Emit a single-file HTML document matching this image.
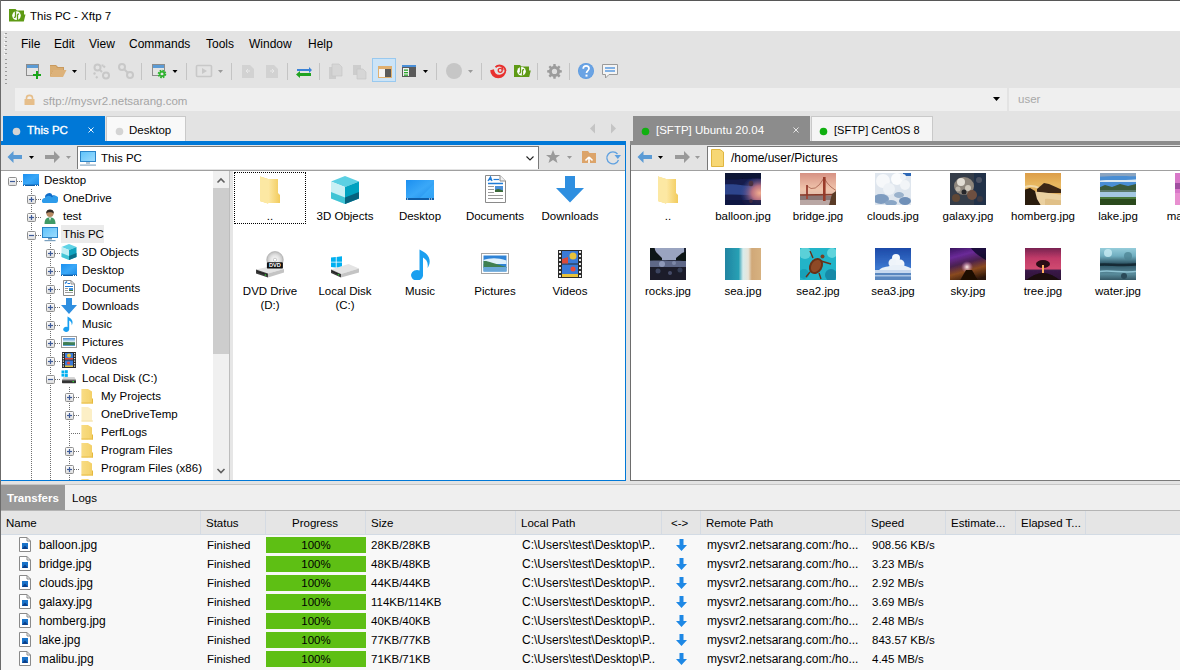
<!DOCTYPE html>
<html><head><meta charset="utf-8">
<style>
*{margin:0;padding:0;box-sizing:border-box}
html,body{width:1180px;height:670px;overflow:hidden}
body{position:relative;background:#e3e3e3;font-family:"Liberation Sans",sans-serif;font-size:11.5px;color:#000}
.a{position:absolute}
.t{position:absolute;white-space:nowrap;line-height:14px}
svg{position:absolute;overflow:visible}
</style></head><body>
<svg width="0" height="0" style="position:absolute;left:0;top:0">
<defs>
<linearGradient id="expg" x1="0" y1="0" x2="0" y2="1"><stop offset="0" stop-color="#fdfdfd"/><stop offset="1" stop-color="#dedede"/></linearGradient>
<linearGradient id="deskg" x1="0" y1="0" x2="1" y2="1"><stop offset="0" stop-color="#1b8ff0"/><stop offset="0.5" stop-color="#3aa8f8"/><stop offset="1" stop-color="#1a8ae8"/></linearGradient>
<linearGradient id="scrg" x1="0" y1="0" x2="1" y2="1"><stop offset="0" stop-color="#5cc2fb"/><stop offset="1" stop-color="#9fdcfd"/></linearGradient>
<linearGradient id="foldg" x1="0" y1="0" x2="1" y2="0"><stop offset="0" stop-color="#fbe39a"/><stop offset="1" stop-color="#f3cf64"/></linearGradient>
<linearGradient id="landg" x1="0" y1="0" x2="0" y2="1"><stop offset="0" stop-color="#4b8fd8"/><stop offset="0.45" stop-color="#d6eaf5"/><stop offset="0.6" stop-color="#3c7f4a"/><stop offset="1" stop-color="#4a90c4"/></linearGradient>
<symbol id="i-desk" viewBox="0 0 16 16"><rect x="0" y="2" width="16" height="12" fill="url(#deskg)"/><rect x="0" y="12.6" width="16" height="1.4" fill="#0f5ea8"/><rect x="1" y="13" width="1" height="1" fill="#fff"/><rect x="12" y="13" width="1" height="1" fill="#fff"/><rect x="14" y="13" width="1" height="1" fill="#fff"/></symbol>
<symbol id="i-cloud" viewBox="0 0 16 16"><path d="M3.5 8.5 A3.8 3.8 0 0 1 10.5 5.5 A3 3 0 0 1 14.5 8 L3.5 8.5Z" fill="#0f6cc8"/><path d="M1 13 A2.8 2.8 0 0 1 3 8 A4 4 0 0 1 10 7.5 A2.8 2.8 0 0 1 16 11 A2.2 2.2 0 0 1 14 13Z" fill="#2d9bea"/></symbol>
<symbol id="i-user" viewBox="0 0 16 16"><path d="M2.5 16 C2.5 10.5 5 9.5 8 9.5 C11 9.5 13.5 10.5 13.5 16Z" fill="#3f9a66"/><path d="M7 10 L8 13 L9 10Z" fill="#f0f0f0"/><circle cx="8" cy="5.3" r="3.6" fill="#b88a63"/><path d="M4.3 5 A3.8 3.8 0 0 1 11.7 5 L11 4 C9 3 7 3 5 4Z" fill="#2f2a26"/><path d="M4.2 5.4 A3.8 3.8 0 0 1 11.8 5.4 C10 3.8 6 3.8 4.2 5.4Z" fill="#2f2a26"/></symbol>
<symbol id="i-pc" viewBox="0 0 16 16"><rect x="0.5" y="1.5" width="15" height="10" fill="url(#scrg)" stroke="#2a84c8"/><rect x="6" y="12" width="4" height="1.5" fill="#6f8ea8"/><rect x="2.5" y="14" width="11" height="1.2" fill="#7aa0bf"/></symbol>
<symbol id="i-cube" viewBox="0 0 16 16"><path d="M8 0 L15.5 3 L8 6 L0.5 3Z" fill="#5fd3e6"/><path d="M0.5 3 L8 6 V16 L0.5 13Z" fill="#bfeef4"/><path d="M15.5 3 L8 6 V16 L15.5 13Z" fill="#0fa3bf"/><path d="M0.5 9 L8 12 V16 L0.5 13Z" fill="#43c5d6"/><path d="M15.5 9 L8 12 V16 L15.5 13Z" fill="#0a6f8a"/></symbol>
<symbol id="i-doc" viewBox="0 0 16 16"><path d="M2.5 0.5 H10 L13.5 4 V15.5 H2.5Z" fill="#fff" stroke="#8a8a8a"/><path d="M10 0.5 V4 H13.5" fill="none" stroke="#8a8a8a"/><path d="M4 6.5H12" stroke="#1f7bd6"/><path d="M4 3.5 L6 1.5" stroke="#1f7bd6" stroke-width="1.2"/><path d="M6.5 3.5H9" stroke="#1f7bd6"/><path d="M4 8.5H7 M4 10.5H7 M4 12.5H12" stroke="#9a9a9a"/><rect x="8" y="8" width="4" height="3" fill="#3d8fd8"/><rect x="8" y="10" width="4" height="1" fill="#3a7a3a"/></symbol>
<symbol id="i-down" viewBox="0 0 16 16"><path d="M5 0 H11 V7 H16 L8 16 L0 7 H5Z" fill="#2f8fe0"/></symbol>
<symbol id="i-music" viewBox="0 0 16 16"><path d="M6.5 0.5 V11 A3 2.6 0 1 0 8.2 13.2 V4.5 C10 5.5 11 7 10.6 9.5 C12.5 7 11.5 3 8.2 1.5 L6.5 0.5Z" fill="#1a9ff0"/></symbol>
<symbol id="i-pics" viewBox="0 0 16 16"><rect x="0.5" y="2.5" width="15" height="11" fill="#fff" stroke="#9a9a9a"/><rect x="2" y="4" width="12" height="8" fill="url(#landg)"/><path d="M2 9 C5 7 8 8 14 10.5 V12 H2Z" fill="#3e7d55"/><path d="M2 11 H14 V12 H2Z" fill="#5aa0d0"/></symbol>
<symbol id="i-video" viewBox="0 0 16 16"><rect x="1" y="0" width="14" height="16" fill="#2b2b2b"/><rect x="4" y="1" width="8" height="6.5" fill="#3a7ad8"/><rect x="4" y="8.5" width="8" height="6.5" fill="#3a7ad8"/><circle cx="8" cy="3.5" r="2" fill="#e8c23a"/><circle cx="7.5" cy="11" r="1.6" fill="#e84a3a"/><path d="M4 6 H12 V7.5 H4Z" fill="#d84a3a"/><path d="M4 13.5 H12 V15 H4Z" fill="#e8c23a"/><g fill="#e8e8e8"><rect x="1.8" y="1" width="1.2" height="1.2"/><rect x="1.8" y="3.5" width="1.2" height="1.2"/><rect x="1.8" y="6" width="1.2" height="1.2"/><rect x="1.8" y="8.5" width="1.2" height="1.2"/><rect x="1.8" y="11" width="1.2" height="1.2"/><rect x="1.8" y="13.5" width="1.2" height="1.2"/><rect x="13" y="1" width="1.2" height="1.2"/><rect x="13" y="3.5" width="1.2" height="1.2"/><rect x="13" y="6" width="1.2" height="1.2"/><rect x="13" y="8.5" width="1.2" height="1.2"/><rect x="13" y="11" width="1.2" height="1.2"/><rect x="13" y="13.5" width="1.2" height="1.2"/></g></symbol>
<symbol id="i-disk" viewBox="0 0 16 16"><g fill="#00b0f0"><rect x="0.5" y="0.5" width="2.8" height="2.8"/><rect x="3.8" y="0.2" width="3" height="3.1"/><rect x="0.5" y="3.8" width="2.8" height="2.8"/><rect x="3.8" y="3.8" width="3" height="3.1"/></g><path d="M2.5 7 H13.5 L15 10 H1Z" fill="#d6d6d6"/><rect x="1" y="9.8" width="14" height="3.4" rx="0.6" fill="#343434"/><rect x="1" y="9.6" width="14" height="0.8" fill="#9a9a9a"/><rect x="11.5" y="11" width="1.4" height="1.2" fill="#2fdf2f"/></symbol>
<symbol id="i-folder" viewBox="0 0 16 16"><path d="M1.5 1 H8 L12 3.5 V15.5 H1.5Z" fill="url(#foldg)"/><path d="M1.5 1 H8 V15.5 H1.5Z" fill="#f6d670" opacity="0.5"/><path d="M12 10 L13 11 V15.5 H12Z" fill="#e5b83c"/><rect x="1.5" y="14.5" width="11.5" height="1" fill="#e7bd48"/></symbol>
<symbol id="i-folderl" viewBox="0 0 16 16"><path d="M1.5 1 H8 L12 3.5 V15.5 H1.5Z" fill="#fcefc6"/><rect x="1.5" y="14.5" width="11.5" height="1" fill="#f5e1a8"/></symbol>
</defs></svg>
<svg width="0" height="0" style="position:absolute;left:0;top:0">
<defs>
<linearGradient id="foldL" x1="0" y1="0" x2="1" y2="0"><stop offset="0" stop-color="#fde9a6"/><stop offset="1" stop-color="#f2cb5c"/></linearGradient>
<linearGradient id="diskg" x1="0" y1="0" x2="0" y2="1"><stop offset="0" stop-color="#f2f2f2"/><stop offset="1" stop-color="#b8b8b8"/></linearGradient>
<radialGradient id="cdg"><stop offset="0" stop-color="#fff"/><stop offset="0.6" stop-color="#e0e0e0"/><stop offset="1" stop-color="#bdbdbd"/></radialGradient>
<symbol id="L-folder" viewBox="0 0 32 32"><path d="M6 3.5 L14 6 L18 6 V26 L14 30.5 L6 28Z" fill="#f4d272"/><path d="M14 6 H24 V25 H18 V6Z" fill="url(#foldL)"/><path d="M6 3.5 L14 6 V30.5 L6 28Z" fill="#fbe7a1"/><path d="M14 6 L24 6 V20 L26 22 V30 H14Z" fill="url(#foldL)"/><path d="M14 30.5 L14 6 L6 3.5 V28Z" fill="#fce8a3"/></symbol>
<symbol id="L-cube" viewBox="0 0 32 32"><path d="M16 3 L30 8.5 L16 14 L2 8.5Z" fill="#5bd0e3"/><path d="M2 8.5 L16 14 V31 L2 25.5Z" fill="#c8f0f5"/><path d="M30 8.5 L16 14 V31 L30 25.5Z" fill="#00a2c0"/><path d="M2 19 L16 24.5 V31 L2 25.5Z" fill="#3fc4d5"/><path d="M30 19 L16 24.5 V31 L30 25.5Z" fill="#06627e"/></symbol>
<symbol id="L-desk" viewBox="0 0 32 32"><rect x="2" y="7" width="28" height="20" fill="url(#deskg)"/><path d="M14 27 L30 11 V27Z" fill="#40b0fb" opacity="0.6"/><rect x="2" y="25" width="28" height="2" fill="#0f5ea8"/><rect x="3" y="25.5" width="1" height="1" fill="#fff"/><rect x="25" y="25.5" width="1" height="1" fill="#fff"/><rect x="27" y="25.5" width="1" height="1" fill="#fff"/></symbol>
<symbol id="L-doc" viewBox="0 0 32 32"><path d="M6.5 2.5 H21 L26.5 8 V29.5 H6.5Z" fill="#fff" stroke="#8a8a8a"/><path d="M21 2.5 V8 H26.5" fill="#f0f0f0" stroke="#8a8a8a"/><path d="M9 8 L11.5 4 L13 8 M10 6.5H12.5" stroke="#1f7bd6" stroke-width="1.3" fill="none"/><path d="M14.5 6.5H20" stroke="#1f7bd6" stroke-width="1.2"/><path d="M9 10.5H24" stroke="#1f7bd6" stroke-width="1.5"/><path d="M9 13.5H15 M9 16.5H15 M9 19.5H15 M9 22.5H24 M9 25.5H24" stroke="#9a9a9a"/><rect x="16" y="13" width="8" height="6" fill="#4a8fd8"/><path d="M16 17 C19 15 21 16 24 17.5 V19 H16Z" fill="#3c6a3a"/></symbol>
<symbol id="L-down" viewBox="0 0 32 32"><path d="M11 3 H21 V15 H30 L16 29.5 L2 15 H11Z" fill="#2f8fe0"/></symbol>
<symbol id="L-dvd" viewBox="0 0 32 32"><circle cx="21" cy="11.8" r="8.3" fill="url(#cdg)" stroke="#a8a8a8" stroke-width="0.6"/><circle cx="21" cy="11.8" r="1.6" fill="#fff" stroke="#999" stroke-width="0.5"/><path d="M2 21.5 L20 17.5 L30 21 L14 25.5Z" fill="#e4e4e4"/><path d="M2 21.5 L14 25.5 V29.5 L2 25.5Z" fill="#3c3c3c"/><path d="M3 23.5 L13 26.8" stroke="#1e1e1e" stroke-width="1"/><path d="M14 25.5 L30 21 V24.5 L14 29.5Z" fill="#c4c4c4"/><circle cx="11.5" cy="27" r="0.8" fill="#2fcf2f"/><rect x="12.9" y="14.2" width="16" height="6.4" rx="1.2" fill="#111"/><text x="20.9" y="19.4" font-size="5.6" font-family="Liberation Sans" fill="#fff" text-anchor="middle" font-weight="bold">DVD</text></symbol>
<symbol id="L-disk" viewBox="0 0 32 32"><g fill="#00b0f0"><path d="M2 9.5 L6.8 9 V13.8 H2Z"/><path d="M7.6 8.9 L13 8.2 V13.8 H7.6Z"/><path d="M2 14.6 H6.8 V19.4 L2 18.9Z"/><path d="M7.6 14.6 H13 V20.2 L7.6 19.5Z"/></g><path d="M2 21.5 L19.5 16 L30 20.5 L12 26Z" fill="#e4e4e4"/><path d="M2 21.5 L12 26 V29.5 L2 25Z" fill="#3c3c3c"/><path d="M3 23.3 L11 27" stroke="#1e1e1e" stroke-width="1"/><path d="M12 26 L30 20.5 V24.5 L12 29.5Z" fill="#c4c4c4"/><circle cx="9.5" cy="26.8" r="0.8" fill="#2fcf2f"/></symbol>
<symbol id="L-music" viewBox="0 0 32 32"><path transform="translate(3 0.5)" d="M12.5 1 V22 A6 5.2 0 1 0 16 26 V9 C19.5 11 21.5 14 20.5 19.5 C24.5 14 23 6.5 16 3 Z" fill="#1a9ff0"/></symbol>
<symbol id="L-pics" viewBox="0 1 32 32"><rect x="2.5" y="6.5" width="27" height="20" fill="#fff" stroke="#a5a5a5"/><rect x="4.5" y="8.5" width="23" height="16" fill="#2f83d6"/><path d="M4.5 13 C10 11 18 10 27.5 13.5 V17 H4.5Z" fill="#dff0fb"/><path d="M4.5 14 C9 13.5 13 16 27.5 20 V21 H4.5Z" fill="#3f7f50"/><path d="M4.5 20 H27.5 V24.5 H4.5Z" fill="#6aa8d8"/></symbol>
<symbol id="L-video" viewBox="0 0 32 32"><rect x="4" y="2" width="24" height="28" fill="#2b2b2b"/><rect x="8" y="3" width="16" height="12.5" fill="#3a7ad8"/><rect x="8" y="16.5" width="16" height="12.5" fill="#3a7ad8"/><circle cx="19" cy="8" r="3.5" fill="#e8c23a"/><path d="M8 11 L14 9 V15.5 H8Z" fill="#d84a3a"/><circle cx="19" cy="21" r="2.5" fill="#e84a3a"/><path d="M8 26 H24 V29 H8Z" fill="#e8c23a"/><g fill="#e8e8e8"><rect x="5" y="3" width="2" height="2"/><rect x="5" y="7" width="2" height="2"/><rect x="5" y="11" width="2" height="2"/><rect x="5" y="15" width="2" height="2"/><rect x="5" y="19" width="2" height="2"/><rect x="5" y="23" width="2" height="2"/><rect x="5" y="27" width="2" height="2"/><rect x="25" y="3" width="2" height="2"/><rect x="25" y="7" width="2" height="2"/><rect x="25" y="11" width="2" height="2"/><rect x="25" y="15" width="2" height="2"/><rect x="25" y="19" width="2" height="2"/><rect x="25" y="23" width="2" height="2"/><rect x="25" y="27" width="2" height="2"/></g></symbol>
</defs></svg>


<!-- window border -->
<div class="a" style="left:0;top:0;width:1180px;height:1px;background:#575757"></div>
<div class="a" style="left:0;top:0;width:1px;height:670px;background:#6b6b6b"></div>
<!-- title bar -->
<div class="a" style="left:1px;top:1px;width:1179px;height:30px;background:#fff"></div>
<div class="t" style="left:30px;top:9px;">This PC - Xftp 7</div>

<!-- menu -->
<div class="t" style="left:21px;top:37px;font-size:12px">File</div>
<div class="t" style="left:54px;top:37px;font-size:12px">Edit</div>
<div class="t" style="left:89px;top:37px;font-size:12px">View</div>
<div class="t" style="left:129px;top:37px;font-size:12px">Commands</div>
<div class="t" style="left:206px;top:37px;font-size:12px">Tools</div>
<div class="t" style="left:249px;top:37px;font-size:12px">Window</div>
<div class="t" style="left:308px;top:37px;font-size:12px">Help</div>

<!-- toolbar -->
<svg style="left:0;top:0" width="640" height="90" viewBox="0 0 640 90">
<!-- gripper -->
<g fill="#9a9a9a">
<rect x="5" y="33" width="2" height="1"/><rect x="5" y="37" width="2" height="1"/><rect x="5" y="41" width="2" height="1"/><rect x="5" y="45" width="2" height="1"/><rect x="5" y="49" width="2" height="1"/><rect x="5" y="53" width="2" height="1"/>
<rect x="5" y="59" width="2" height="1"/><rect x="5" y="63" width="2" height="1"/><rect x="5" y="67" width="2" height="1"/><rect x="5" y="71" width="2" height="1"/><rect x="5" y="75" width="2" height="1"/><rect x="5" y="79" width="2" height="1"/><rect x="5" y="83" width="2" height="1"/>
</g>
<g fill="#ffffff">
<rect x="4" y="34" width="1" height="1"/><rect x="4" y="38" width="1" height="1"/><rect x="4" y="42" width="1" height="1"/><rect x="4" y="46" width="1" height="1"/><rect x="4" y="50" width="1" height="1"/><rect x="4" y="54" width="1" height="1"/>
</g>
<!-- separators -->
<g fill="#c4c4c4"><rect x="85" y="63" width="1" height="17"/><rect x="141" y="63" width="1" height="17"/><rect x="186" y="63" width="1" height="17"/><rect x="231" y="63" width="1" height="17"/><rect x="287" y="63" width="1" height="17"/><rect x="319" y="63" width="1" height="17"/><rect x="436" y="63" width="1" height="17"/><rect x="481" y="63" width="1" height="17"/><rect x="537" y="63" width="1" height="17"/><rect x="569" y="63" width="1" height="17"/></g>
<!-- new session -->
<rect x="26.5" y="64.5" width="12" height="11" fill="#e4e4e4" stroke="#8c8c8c"/><rect x="27" y="65" width="11" height="3" fill="#5b9bd5"/>
<path d="M33 75H41M37 71V79" stroke="#19a619" stroke-width="2"/>
<!-- open folder -->
<path d="M50 65H56L58 67H64V70H54L50 77Z" fill="#c99a5e"/><path d="M50 77L53.5 70H66.5L63 77Z" fill="#ddb27a"/><path d="M50 66H56L57 68H63V70H53.5L50 76Z" fill="#d9ad72"/>
<path d="M72 70H77L74.5 73Z" fill="#000"/>
<!-- disconnect -->
<g stroke="#c8c8c8" stroke-width="2" fill="none"><circle cx="97.5" cy="67.5" r="3"/><circle cx="106" cy="75.5" r="3"/><path d="M100 70L102 72"/><path d="M102.5 64.5V66.5M105 66L103.5 67.5M93.5 74L95.5 73M96 78L97.5 76.5"/></g>
<!-- reconnect -->
<g stroke="#c8c8c8" stroke-width="2" fill="none"><circle cx="122" cy="67" r="3"/><circle cx="130" cy="75" r="3"/><path d="M124 69L128 73"/></g>
<!-- session props -->
<rect x="152.5" y="64.5" width="12" height="11" fill="#e4e4e4" stroke="#8c8c8c"/><rect x="153" y="65" width="11" height="3" fill="#5b9bd5"/>
<circle cx="162" cy="74" r="3.2" fill="none" stroke="#2db52d" stroke-width="2.2" stroke-dasharray="1.6 0.9"/><circle cx="162" cy="74" r="2.2" fill="none" stroke="#2db52d" stroke-width="1.4"/>
<path d="M172.5 70H177.5L175 73Z" fill="#000"/>
<!-- play -->
<rect x="196.5" y="65.5" width="15" height="11" rx="1" fill="none" stroke="#c8c8c8" stroke-width="1.6"/><path d="M202 68L207 71L202 74Z" fill="#c8c8c8"/>
<path d="M218 70H223L220.5 73Z" fill="#9a9a9a"/>
<!-- doc left/right -->
<path d="M242 65H250L254 69V78H242Z" fill="#d2d2d2"/><path d="M250 71H246L248 69M246 71L248 73" stroke="#e8e8e8" stroke-width="1" fill="none"/>
<path d="M266 65H274L278 69V78H266Z" fill="#d2d2d2"/><path d="M270 71H274L272 69M274 71L272 73" stroke="#e8e8e8" stroke-width="1" fill="none"/>
<!-- sync arrows -->
<path d="M297 69H309V67L312 70L309 73V71H297Z" fill="#3b82d6"/><path d="M311 73H300V71L296 74.5L300 78V76H311Z" fill="#21a321"/>
<!-- copy/paste -->
<path d="M329 67H336V79H329Z" fill="#cdcdcd"/><path d="M332 64H339L342 67V76H332Z" fill="#d6d6d6" stroke="#c4c4c4" stroke-width="0.6"/>
<path d="M353 65H361V75H353Z" fill="#cdcdcd"/><path d="M357 69H363L366 72V79H357Z" fill="#d6d6d6" stroke="#c4c4c4" stroke-width="0.6"/>
<!-- selected layout -->
<rect x="372.5" y="58.5" width="23" height="23" fill="#cce4f7" stroke="#99c9ef"/>
<rect x="378" y="66" width="14" height="12" fill="#e0b070"/><rect x="379" y="69" width="6" height="8" fill="#f4f4f4"/><rect x="385" y="69" width="6" height="8" fill="#5a5a5a"/>
<!-- layout2 -->
<rect x="402" y="65" width="14" height="12" fill="#5a5a5a"/><rect x="402" y="65" width="14" height="2" fill="#4a8fd8"/><rect x="403" y="68" width="6" height="8" fill="#f0f0f0"/><g fill="#2aa52a"><rect x="404" y="69.5" width="4" height="1.3"/><rect x="404" y="72" width="4" height="1.3"/><rect x="404" y="74.5" width="4" height="1.3"/></g>
<path d="M423 70H428L425.5 73Z" fill="#000"/>
<!-- gray circle -->
<circle cx="454" cy="71" r="8" fill="#c6c6c6"/>
<path d="M468 70H473L470.5 73Z" fill="#9a9a9a"/>
<!-- xshell red swirl -->
<path d="M490.2 70.3 A8 8 0 0 0 506.3 70.3 L504.8 69.6 A5.4 5.4 0 0 1 494 69.3 Z" fill="#e8312f"/>
<path d="M505.6 70.6 A6 6.4 0 0 0 495.6 67.2" fill="none" stroke="#e8312f" stroke-width="1.7"/>
<path d="M495.6 67.2 A4.2 4.2 0 0 1 503 70.2" fill="none" stroke="#e8312f" stroke-width="1.2"/>
<circle cx="500.2" cy="70.3" r="2" fill="none" stroke="#e8312f" stroke-width="1.3"/>
<!-- xftp green folder -->
<path d="M514 65H520L521.5 66.5H529V70.5H530.8L529.2 77H514Z" fill="#5e9a14"/>
<circle cx="521.5" cy="71.3" r="4.3" fill="#fff"/>
<path d="M520.5 67V71.9Q520.5 73.1 518.9 73.1M522.5 75.6V70.7Q522.5 69.5 524.1 69.5" fill="none" stroke="#5e9a14" stroke-width="1.3"/>
<!-- gear -->
<path d="M553.34 64.09 L555.66 64.09 L555.81 65.95 L557.43 66.63 L558.85 65.41 L560.49 67.05 L559.27 68.47 L559.95 70.09 L561.81 70.24 L561.81 72.56 L559.95 72.71 L559.27 74.33 L560.49 75.75 L558.85 77.39 L557.43 76.17 L555.81 76.85 L555.66 78.71 L553.34 78.71 L553.19 76.85 L551.57 76.17 L550.15 77.39 L548.51 75.75 L549.73 74.33 L549.05 72.71 L547.19 72.56 L547.19 70.24 L549.05 70.09 L549.73 68.47 L548.51 67.05 L550.15 65.41 L551.57 66.63 L553.19 65.95Z" fill="#9c9c9c"/><circle cx="554.5" cy="71.4" r="2.6" fill="#dedede"/>
<!-- help -->
<circle cx="586" cy="71" r="8" fill="#5b9ae0"/><circle cx="586" cy="71" r="7.3" fill="#6aa3e4"/>
<path d="M583.2 68.8 C583.2 66.6 584.7 65.8 586.1 65.8 C587.8 65.8 589 66.8 589 68.5 C589 70.5 586.5 70.6 586.5 73" stroke="#fff" stroke-width="1.7" fill="none"/><rect x="585.5" y="74.6" width="2" height="2" fill="#fff"/>
<!-- chat -->
<path d="M602.5 64.5H617.5V74.5H609L605.5 78V74.5H602.5Z" fill="#f4f4f4" stroke="#9a9a9a"/><path d="M605 68H615M605 71H615" stroke="#5b9ae0" stroke-width="1.5"/>
</svg>

<!-- address bar -->
<div class="a" style="left:15px;top:88px;width:992px;height:23px;background:#efefef"></div>
<div class="a" style="left:1009px;top:88px;width:171px;height:23px;background:#efefef"></div>
<div class="t" style="left:43px;top:94px;color:#a5a5a5">sftp://mysvr2.netsarang.com</div>
<div class="t" style="left:1018px;top:92px;color:#a8a8a8">user</div>

<!-- tabs -->
<div class="a" style="left:3px;top:116px;width:102px;height:25px;background:#0078d7"></div>
<div class="t" style="left:27px;top:123px;color:#fff;-webkit-text-stroke:0.35px #fff">This PC</div>
<div class="a" style="left:106px;top:116px;width:80px;height:25px;background:#f9f9f9;border:1px solid #c9c9c9;border-bottom:none"></div>
<div class="t" style="left:129px;top:123px">Desktop</div>
<div class="a" style="left:1px;top:141px;width:625px;height:4px;background:#0078d7"></div>

<div class="a" style="left:633px;top:116px;width:177px;height:25px;background:#8c8c8c"></div>
<div class="t" style="left:656px;top:123px;color:#fff">[SFTP] Ubuntu 20.04</div>
<div class="a" style="left:811px;top:116px;width:122px;height:25px;background:#f5f5f5;border:1px solid #c9c9c9;border-bottom:none"></div>
<div class="t" style="left:834px;top:123px;font-size:11px">[SFTP] CentOS 8</div>
<div class="a" style="left:630px;top:141px;width:550px;height:4px;background:#8c8c8c"></div>

<!-- left panel -->
<div class="a" style="left:1px;top:145px;width:625px;height:336px;border:1px solid #0078d7;border-top:none;border-left:none;background:#fff"></div>
<div class="a" style="left:1px;top:145px;width:624px;height:26px;background:#e3e3e3;border-bottom:1px solid #a0a0a0"></div>
<div class="a" style="left:77px;top:146px;width:462px;height:23px;background:#fff;border-top:1px solid #7a7a7a;border-left:1px solid #7a7a7a;border-right:1px solid #7a7a7a"></div>
<div class="t" style="left:101px;top:151px">This PC</div>
<!-- scrollbar + splitter -->
<div class="a" style="left:213px;top:171px;width:16px;height:309px;background:#f0f0f0"></div>
<div class="a" style="left:213px;top:188px;width:16px;height:166px;background:#cdcdcd"></div>
<div class="a" style="left:229px;top:171px;width:4px;height:309px;background:#e6e6e6;border-left:1px solid #bdbdbd"></div>

<!-- view -->
<svg style="left:254px;top:173px" width="32" height="32"><use href="#L-folder"/></svg>
<div class="t" style="left:230px;top:209px;width:80px;text-align:center;line-height:14px">..</div>
<svg style="left:329px;top:173px" width="32" height="32"><use href="#L-cube"/></svg>
<div class="t" style="left:305px;top:209px;width:80px;text-align:center;line-height:14px">3D Objects</div>
<svg style="left:404px;top:173px" width="32" height="32"><use href="#L-desk"/></svg>
<div class="t" style="left:380px;top:209px;width:80px;text-align:center;line-height:14px">Desktop</div>
<svg style="left:479px;top:173px" width="32" height="32"><use href="#L-doc"/></svg>
<div class="t" style="left:455px;top:209px;width:80px;text-align:center;line-height:14px">Documents</div>
<svg style="left:554px;top:173px" width="32" height="32"><use href="#L-down"/></svg>
<div class="t" style="left:530px;top:209px;width:80px;text-align:center;line-height:14px">Downloads</div>
<svg style="left:254px;top:248px" width="32" height="32"><use href="#L-dvd"/></svg>
<div class="t" style="left:230px;top:284px;width:80px;text-align:center;line-height:14px">DVD Drive<br>(D:)</div>
<svg style="left:329px;top:248px" width="32" height="32"><use href="#L-disk"/></svg>
<div class="t" style="left:305px;top:284px;width:80px;text-align:center;line-height:14px">Local Disk<br>(C:)</div>
<svg style="left:404px;top:248px" width="32" height="32"><use href="#L-music"/></svg>
<div class="t" style="left:380px;top:284px;width:80px;text-align:center;line-height:14px">Music</div>
<svg style="left:479px;top:248px" width="32" height="32"><use href="#L-pics"/></svg>
<div class="t" style="left:455px;top:284px;width:80px;text-align:center;line-height:14px">Pictures</div>
<svg style="left:554px;top:248px" width="32" height="32"><use href="#L-video"/></svg>
<div class="t" style="left:530px;top:284px;width:80px;text-align:center;line-height:14px">Videos</div>
<div class="a" style="left:234px;top:172px;width:72px;height:52px;border:1px dotted #000"></div>
<!-- tree -->
<div class="a" style="left:1px;top:171px;width:212px;height:309px;overflow:hidden">
<div class="a" style="left:30px;top:18px;width:1px;height:291px;background:repeating-linear-gradient(#6f6f6f 0 1px,transparent 1px 2px)"></div>
<div class="a" style="left:49px;top:72px;width:1px;height:237px;background:repeating-linear-gradient(#6f6f6f 0 1px,transparent 1px 2px)"></div>
<div class="a" style="left:68px;top:216px;width:1px;height:93px;background:repeating-linear-gradient(#6f6f6f 0 1px,transparent 1px 2px)"></div>
<div class="a" style="left:60px;top:54px;width:43px;height:18px;background:#ebebeb"></div>
<div class="a" style="left:16px;top:10px;width:6px;height:1px;background:repeating-linear-gradient(90deg,#6f6f6f 0 1px,transparent 1px 2px)"></div>
<svg style="left:7px;top:6px" width="9" height="9" viewBox="0 0 9 9"><defs></defs><rect x="0.5" y="0.5" width="8" height="8" rx="1" fill="url(#expg)" stroke="#8f8f8f"/><path d="M2 4.5H7" stroke="#3d5a98" stroke-width="1.2"/></svg>
<svg style="left:22px;top:1px" width="16" height="16"><use href="#i-desk"/></svg>
<div class="t" style="left:43px;top:2px">Desktop</div>
<div class="a" style="left:35px;top:28px;width:6px;height:1px;background:repeating-linear-gradient(90deg,#6f6f6f 0 1px,transparent 1px 2px)"></div>
<svg style="left:26px;top:24px" width="9" height="9" viewBox="0 0 9 9"><defs></defs><rect x="0.5" y="0.5" width="8" height="8" rx="1" fill="url(#expg)" stroke="#8f8f8f"/><path d="M2 4.5H7" stroke="#3d5a98" stroke-width="1.2"/><path d="M4.5 2V7" stroke="#3d5a98" stroke-width="1.2"/></svg>
<svg style="left:41px;top:19px" width="16" height="16"><use href="#i-cloud"/></svg>
<div class="t" style="left:62px;top:20px">OneDrive</div>
<div class="a" style="left:35px;top:46px;width:6px;height:1px;background:repeating-linear-gradient(90deg,#6f6f6f 0 1px,transparent 1px 2px)"></div>
<svg style="left:26px;top:42px" width="9" height="9" viewBox="0 0 9 9"><defs></defs><rect x="0.5" y="0.5" width="8" height="8" rx="1" fill="url(#expg)" stroke="#8f8f8f"/><path d="M2 4.5H7" stroke="#3d5a98" stroke-width="1.2"/><path d="M4.5 2V7" stroke="#3d5a98" stroke-width="1.2"/></svg>
<svg style="left:41px;top:37px" width="16" height="16"><use href="#i-user"/></svg>
<div class="t" style="left:62px;top:38px">test</div>
<div class="a" style="left:35px;top:64px;width:6px;height:1px;background:repeating-linear-gradient(90deg,#6f6f6f 0 1px,transparent 1px 2px)"></div>
<svg style="left:26px;top:60px" width="9" height="9" viewBox="0 0 9 9"><defs></defs><rect x="0.5" y="0.5" width="8" height="8" rx="1" fill="url(#expg)" stroke="#8f8f8f"/><path d="M2 4.5H7" stroke="#3d5a98" stroke-width="1.2"/></svg>
<svg style="left:41px;top:55px" width="16" height="16"><use href="#i-pc"/></svg>
<div class="t" style="left:62px;top:56px">This PC</div>
<div class="a" style="left:54px;top:82px;width:6px;height:1px;background:repeating-linear-gradient(90deg,#6f6f6f 0 1px,transparent 1px 2px)"></div>
<svg style="left:45px;top:78px" width="9" height="9" viewBox="0 0 9 9"><defs></defs><rect x="0.5" y="0.5" width="8" height="8" rx="1" fill="url(#expg)" stroke="#8f8f8f"/><path d="M2 4.5H7" stroke="#3d5a98" stroke-width="1.2"/><path d="M4.5 2V7" stroke="#3d5a98" stroke-width="1.2"/></svg>
<svg style="left:60px;top:73px" width="16" height="16"><use href="#i-cube"/></svg>
<div class="t" style="left:81px;top:74px">3D Objects</div>
<div class="a" style="left:54px;top:100px;width:6px;height:1px;background:repeating-linear-gradient(90deg,#6f6f6f 0 1px,transparent 1px 2px)"></div>
<svg style="left:45px;top:96px" width="9" height="9" viewBox="0 0 9 9"><defs></defs><rect x="0.5" y="0.5" width="8" height="8" rx="1" fill="url(#expg)" stroke="#8f8f8f"/><path d="M2 4.5H7" stroke="#3d5a98" stroke-width="1.2"/><path d="M4.5 2V7" stroke="#3d5a98" stroke-width="1.2"/></svg>
<svg style="left:60px;top:91px" width="16" height="16"><use href="#i-desk"/></svg>
<div class="t" style="left:81px;top:92px">Desktop</div>
<div class="a" style="left:54px;top:118px;width:6px;height:1px;background:repeating-linear-gradient(90deg,#6f6f6f 0 1px,transparent 1px 2px)"></div>
<svg style="left:45px;top:114px" width="9" height="9" viewBox="0 0 9 9"><defs></defs><rect x="0.5" y="0.5" width="8" height="8" rx="1" fill="url(#expg)" stroke="#8f8f8f"/><path d="M2 4.5H7" stroke="#3d5a98" stroke-width="1.2"/><path d="M4.5 2V7" stroke="#3d5a98" stroke-width="1.2"/></svg>
<svg style="left:60px;top:109px" width="16" height="16"><use href="#i-doc"/></svg>
<div class="t" style="left:81px;top:110px">Documents</div>
<div class="a" style="left:54px;top:136px;width:6px;height:1px;background:repeating-linear-gradient(90deg,#6f6f6f 0 1px,transparent 1px 2px)"></div>
<svg style="left:45px;top:132px" width="9" height="9" viewBox="0 0 9 9"><defs></defs><rect x="0.5" y="0.5" width="8" height="8" rx="1" fill="url(#expg)" stroke="#8f8f8f"/><path d="M2 4.5H7" stroke="#3d5a98" stroke-width="1.2"/><path d="M4.5 2V7" stroke="#3d5a98" stroke-width="1.2"/></svg>
<svg style="left:60px;top:127px" width="16" height="16"><use href="#i-down"/></svg>
<div class="t" style="left:81px;top:128px">Downloads</div>
<div class="a" style="left:54px;top:154px;width:6px;height:1px;background:repeating-linear-gradient(90deg,#6f6f6f 0 1px,transparent 1px 2px)"></div>
<svg style="left:45px;top:150px" width="9" height="9" viewBox="0 0 9 9"><defs></defs><rect x="0.5" y="0.5" width="8" height="8" rx="1" fill="url(#expg)" stroke="#8f8f8f"/><path d="M2 4.5H7" stroke="#3d5a98" stroke-width="1.2"/><path d="M4.5 2V7" stroke="#3d5a98" stroke-width="1.2"/></svg>
<svg style="left:60px;top:145px" width="16" height="16"><use href="#i-music"/></svg>
<div class="t" style="left:81px;top:146px">Music</div>
<div class="a" style="left:54px;top:172px;width:6px;height:1px;background:repeating-linear-gradient(90deg,#6f6f6f 0 1px,transparent 1px 2px)"></div>
<svg style="left:45px;top:168px" width="9" height="9" viewBox="0 0 9 9"><defs></defs><rect x="0.5" y="0.5" width="8" height="8" rx="1" fill="url(#expg)" stroke="#8f8f8f"/><path d="M2 4.5H7" stroke="#3d5a98" stroke-width="1.2"/><path d="M4.5 2V7" stroke="#3d5a98" stroke-width="1.2"/></svg>
<svg style="left:60px;top:163px" width="16" height="16"><use href="#i-pics"/></svg>
<div class="t" style="left:81px;top:164px">Pictures</div>
<div class="a" style="left:54px;top:190px;width:6px;height:1px;background:repeating-linear-gradient(90deg,#6f6f6f 0 1px,transparent 1px 2px)"></div>
<svg style="left:45px;top:186px" width="9" height="9" viewBox="0 0 9 9"><defs></defs><rect x="0.5" y="0.5" width="8" height="8" rx="1" fill="url(#expg)" stroke="#8f8f8f"/><path d="M2 4.5H7" stroke="#3d5a98" stroke-width="1.2"/><path d="M4.5 2V7" stroke="#3d5a98" stroke-width="1.2"/></svg>
<svg style="left:60px;top:181px" width="16" height="16"><use href="#i-video"/></svg>
<div class="t" style="left:81px;top:182px">Videos</div>
<div class="a" style="left:54px;top:208px;width:6px;height:1px;background:repeating-linear-gradient(90deg,#6f6f6f 0 1px,transparent 1px 2px)"></div>
<svg style="left:45px;top:204px" width="9" height="9" viewBox="0 0 9 9"><defs></defs><rect x="0.5" y="0.5" width="8" height="8" rx="1" fill="url(#expg)" stroke="#8f8f8f"/><path d="M2 4.5H7" stroke="#3d5a98" stroke-width="1.2"/></svg>
<svg style="left:60px;top:199px" width="16" height="16"><use href="#i-disk"/></svg>
<div class="t" style="left:81px;top:200px">Local Disk (C:)</div>
<div class="a" style="left:73px;top:226px;width:6px;height:1px;background:repeating-linear-gradient(90deg,#6f6f6f 0 1px,transparent 1px 2px)"></div>
<svg style="left:64px;top:222px" width="9" height="9" viewBox="0 0 9 9"><defs></defs><rect x="0.5" y="0.5" width="8" height="8" rx="1" fill="url(#expg)" stroke="#8f8f8f"/><path d="M2 4.5H7" stroke="#3d5a98" stroke-width="1.2"/><path d="M4.5 2V7" stroke="#3d5a98" stroke-width="1.2"/></svg>
<svg style="left:79px;top:217px" width="16" height="16"><use href="#i-folder"/></svg>
<div class="t" style="left:100px;top:218px">My Projects</div>
<div class="a" style="left:73px;top:244px;width:6px;height:1px;background:repeating-linear-gradient(90deg,#6f6f6f 0 1px,transparent 1px 2px)"></div>
<svg style="left:64px;top:240px" width="9" height="9" viewBox="0 0 9 9"><defs></defs><rect x="0.5" y="0.5" width="8" height="8" rx="1" fill="url(#expg)" stroke="#8f8f8f"/><path d="M2 4.5H7" stroke="#3d5a98" stroke-width="1.2"/><path d="M4.5 2V7" stroke="#3d5a98" stroke-width="1.2"/></svg>
<svg style="left:79px;top:235px" width="16" height="16"><use href="#i-folderl"/></svg>
<div class="t" style="left:100px;top:236px">OneDriveTemp</div>
<div class="a" style="left:68px;top:262px;width:11px;height:1px;background:repeating-linear-gradient(90deg,#6f6f6f 0 1px,transparent 1px 2px)"></div>
<svg style="left:79px;top:253px" width="16" height="16"><use href="#i-folder"/></svg>
<div class="t" style="left:100px;top:254px">PerfLogs</div>
<div class="a" style="left:73px;top:280px;width:6px;height:1px;background:repeating-linear-gradient(90deg,#6f6f6f 0 1px,transparent 1px 2px)"></div>
<svg style="left:64px;top:276px" width="9" height="9" viewBox="0 0 9 9"><defs></defs><rect x="0.5" y="0.5" width="8" height="8" rx="1" fill="url(#expg)" stroke="#8f8f8f"/><path d="M2 4.5H7" stroke="#3d5a98" stroke-width="1.2"/><path d="M4.5 2V7" stroke="#3d5a98" stroke-width="1.2"/></svg>
<svg style="left:79px;top:271px" width="16" height="16"><use href="#i-folder"/></svg>
<div class="t" style="left:100px;top:272px">Program Files</div>
<div class="a" style="left:73px;top:298px;width:6px;height:1px;background:repeating-linear-gradient(90deg,#6f6f6f 0 1px,transparent 1px 2px)"></div>
<svg style="left:64px;top:294px" width="9" height="9" viewBox="0 0 9 9"><defs></defs><rect x="0.5" y="0.5" width="8" height="8" rx="1" fill="url(#expg)" stroke="#8f8f8f"/><path d="M2 4.5H7" stroke="#3d5a98" stroke-width="1.2"/><path d="M4.5 2V7" stroke="#3d5a98" stroke-width="1.2"/></svg>
<svg style="left:79px;top:289px" width="16" height="16"><use href="#i-folder"/></svg>
<div class="t" style="left:100px;top:290px">Program Files (x86)</div>
<div class="a" style="left:68px;top:316px;width:11px;height:1px;background:repeating-linear-gradient(90deg,#6f6f6f 0 1px,transparent 1px 2px)"></div>
<svg style="left:79px;top:307px" width="16" height="16"><use href="#i-folder"/></svg>
</div>
<!-- right panel -->
<div class="a" style="left:630px;top:145px;width:550px;height:336px;background:#fff;border-left:1px solid #6d6d6d;border-bottom:1px solid #7a7a7a"></div>
<div class="a" style="left:631px;top:145px;width:549px;height:26px;background:#e3e3e3;border-bottom:1px solid #a0a0a0"></div>
<div class="a" style="left:707px;top:146px;width:473px;height:24px;background:#fff;border-top:1px solid #777;border-left:1px solid #777"></div>
<div class="t" style="left:731px;top:151px;font-size:12px">/home/user/Pictures</div>

<!-- view2 -->
<svg width="0" height="0" style="position:absolute"><defs><filter id="soft" x="-10%" y="-10%" width="120%" height="120%"><feGaussianBlur stdDeviation="0.7"/></filter></defs></svg>
<div class="a" style="left:631px;top:171px;width:549px;height:309px;overflow:hidden"><div class="a" style="left:-631px;top:-171px;width:1180px;height:480px"><svg style="left:652px;top:173px" width="32" height="32"><use href="#L-folder"/></svg>
<div class="t" style="left:628px;top:209px;width:80px;text-align:center;line-height:14px">..</div>
<svg style="left:725px;top:173px;overflow:hidden" width="36" height="32" viewBox="0 0 36 32"><defs><filter id="sf1" x="-20%" y="-20%" width="140%" height="140%"><feGaussianBlur stdDeviation="0.6"/></filter></defs><g filter="url(#sf1)"><defs><radialGradient id="tb1g" cx="0.88" cy="0.6" r="0.45"><stop offset="0" stop-color="#f4b090"/><stop offset="0.4" stop-color="#b87080"/><stop offset="1" stop-color="#3a4a9a" stop-opacity="0"/></radialGradient></defs>
<rect x="-4" y="-4" width="44" height="40" fill="#131c4c"/><path d="M-4 12 C8 10 20 13 40 15 V24 C24 22 10 21 -4 22Z" fill="#34509c" opacity="0.8"/><rect x="-4" y="-4" width="44" height="40" fill="url(#tb1g)"/>
<path d="M-4 -4 H40 V6 C20 4 10 8 -4 6Z" fill="#0c1236"/><rect x="-4" y="27" width="44" height="10" fill="#121840" opacity="0.8"/>
<ellipse cx="26" cy="10.5" rx="2.3" ry="2.8" fill="#4a3040"/><ellipse cx="26" cy="28" rx="1.8" ry="2" fill="#4a3040" opacity="0.8"/></g></svg>
<div class="t" style="left:703px;top:209px;width:80px;text-align:center;line-height:14px">balloon.jpg</div>
<svg style="left:800px;top:173px;overflow:hidden" width="36" height="32" viewBox="0 0 36 32"><defs><filter id="sf2" x="-20%" y="-20%" width="140%" height="140%"><feGaussianBlur stdDeviation="0.6"/></filter></defs><g filter="url(#sf2)"><defs><linearGradient id="tb2" x1="0" y1="0" x2="0" y2="1"><stop offset="0" stop-color="#d0857a"/><stop offset="0.5" stop-color="#f0c4ac"/><stop offset="1" stop-color="#c0aca8"/></linearGradient></defs>
<rect x="-4" y="-4" width="44" height="40" fill="url(#tb2)"/><path d="M-4 23 C8 21 14 22 40 23 V36 H-4Z" fill="#8a7674"/><path d="M-4 27 H40 V36 H-4Z" fill="#c4b4b0" opacity="0.8"/>
<rect x="23" y="4" width="2.6" height="24" fill="#9a3a2a"/><rect x="6" y="12" width="2" height="14" fill="#a04a3a"/>
<path d="M-4 22 L40 21.5" stroke="#8a3a2a" stroke-width="1.4"/><path d="M7 13 Q15 21 24 5 Q30 16 40 19" fill="none" stroke="#8a3a2a" stroke-width="0.6"/>
<path d="M28 36 L32 21 L40 15 V36Z" fill="#5a3a28"/></g></svg>
<div class="t" style="left:778px;top:209px;width:80px;text-align:center;line-height:14px">bridge.jpg</div>
<svg style="left:875px;top:173px;overflow:hidden" width="36" height="32" viewBox="0 0 36 32"><defs><filter id="sf3" x="-20%" y="-20%" width="140%" height="140%"><feGaussianBlur stdDeviation="0.6"/></filter></defs><g filter="url(#sf3)"><rect x="-4" y="-4" width="44" height="40" fill="#dfe6ee"/>
<circle cx="8" cy="8" r="7" fill="#f6f8fa"/><circle cx="22" cy="6" r="6" fill="#fbfcfd"/><circle cx="14" cy="16" r="6" fill="#eef2f6"/>
<ellipse cx="6" cy="26" rx="8" ry="5" fill="#7e9cc0"/><ellipse cx="24" cy="22" rx="5" ry="3" fill="#9ab2cc"/><ellipse cx="30" cy="28" rx="6" ry="4" fill="#6f90b8"/><ellipse cx="16" cy="30" rx="6" ry="3" fill="#8aa6c6"/>
<circle cx="30" cy="12" r="5" fill="#f2f5f8"/><rect x="28" y="-4" width="12" height="7" fill="#2a66b6"/><circle cx="28" cy="4" r="3" fill="#f0f4f8"/></g></svg>
<div class="t" style="left:853px;top:209px;width:80px;text-align:center;line-height:14px">clouds.jpg</div>
<svg style="left:950px;top:173px;overflow:hidden" width="36" height="32" viewBox="0 0 36 32"><defs><filter id="sf4" x="-20%" y="-20%" width="140%" height="140%"><feGaussianBlur stdDeviation="0.6"/></filter></defs><g filter="url(#sf4)"><rect x="-4" y="-4" width="44" height="40" fill="#343c4a"/><rect x="24" y="-4" width="16" height="40" fill="#24304a"/>
<ellipse cx="14" cy="13" rx="10" ry="9" fill="#8e867c"/><circle cx="11" cy="9" r="4" fill="#e2ddd4"/><circle cx="18" cy="15" r="3" fill="#cfc8bc"/><circle cx="8" cy="16" r="2.5" fill="#bdb6aa"/><circle cx="22" cy="22" r="5" fill="#6e5040"/><circle cx="6" cy="25" r="4" fill="#5e4636"/><circle cx="14" cy="19" r="2.5" fill="#25252c"/><circle cx="29" cy="7" r="3" fill="#4a5264"/><circle cx="30" cy="26" r="3" fill="#3a3a44"/></g></svg>
<div class="t" style="left:928px;top:209px;width:80px;text-align:center;line-height:14px">galaxy.jpg</div>
<svg style="left:1025px;top:173px;overflow:hidden" width="36" height="32" viewBox="0 0 36 32"><defs><filter id="sf5" x="-20%" y="-20%" width="140%" height="140%"><feGaussianBlur stdDeviation="0.6"/></filter></defs><g filter="url(#sf5)"><defs><linearGradient id="tb5" x1="0" y1="0" x2="0" y2="1"><stop offset="0" stop-color="#d89440"/><stop offset="0.4" stop-color="#e8b860"/><stop offset="1" stop-color="#c89050"/></linearGradient></defs>
<rect x="-4" y="-4" width="44" height="40" fill="url(#tb5)"/><path d="M0 14 C6 12 10 13 14 15" stroke="#f0d8a8" stroke-width="2" fill="none"/><path d="M12 16 L19 10 L24 11 L40 18 V20 H12Z" fill="#3a2818"/><path d="M-4 20 C10 17 20 20 40 22 V36 H-4Z" fill="#ead0a0"/><path d="M-4 18 L5 15 L10 18 L12 26 L18 36 H-4Z" fill="#2a1a10"/><path d="M20 26 C26 25 32 28 40 27 V36 H20Z" fill="#e0c088"/></g></svg>
<div class="t" style="left:1003px;top:209px;width:80px;text-align:center;line-height:14px">homberg.jpg</div>
<svg style="left:1100px;top:173px;overflow:hidden" width="36" height="32" viewBox="0 0 36 32"><defs><filter id="sf6" x="-20%" y="-20%" width="140%" height="140%"><feGaussianBlur stdDeviation="0.6"/></filter></defs><g filter="url(#sf6)"><rect x="-4" y="-4" width="44" height="40" fill="#4a8ed4"/><path d="M-4 -4 H40 V3 C30 4 20 2 -4 4Z" fill="#8aa4c0"/><path d="M-4 8 C8 6 20 8 40 6 V9 H-4Z" fill="#dce8f0"/>
<path d="M-4 16 L5 12 L12 14 L20 11 L28 13 L40 10 V17 H-4Z" fill="#3a5a3a"/><rect x="-4" y="17" width="44" height="7" fill="#a4c8e2"/><path d="M-4 17 H40 V19 H-4Z" fill="#5a7a6a"/><rect x="-4" y="24" width="44" height="12" fill="#2a4a1a"/><path d="M-4 24 H40 V26 H-4Z" fill="#4a7a3a"/></g></svg>
<div class="t" style="left:1078px;top:209px;width:80px;text-align:center;line-height:14px">lake.jpg</div>
<svg style="left:1175px;top:173px;overflow:hidden" width="36" height="32" viewBox="0 0 36 32"><defs><filter id="sf7" x="-20%" y="-20%" width="140%" height="140%"><feGaussianBlur stdDeviation="0.6"/></filter></defs><g filter="url(#sf7)"><rect x="-4" y="-4" width="44" height="40" fill="#d878c8"/><rect x="-4" y="10" width="44" height="6" fill="#a050a0"/><rect x="-4" y="20" width="44" height="16" fill="#e890d0"/></g></svg>
<div class="t" style="left:1153px;top:209px;width:80px;text-align:center;line-height:14px">malibu.jpg</div>
<svg style="left:650px;top:248px;overflow:hidden" width="36" height="32" viewBox="0 0 36 32"><defs><filter id="sf8" x="-20%" y="-20%" width="140%" height="140%"><feGaussianBlur stdDeviation="0.6"/></filter></defs><g filter="url(#sf8)"><rect x="-4" y="-4" width="44" height="40" fill="#1e2232"/><path d="M4 -4 H34 V8 L26 12 L12 12 L6 8Z" fill="#9aa4c0"/><path d="M-4 -4 H2 L6 4 L12 10 L12 13 H-4Z" fill="#101218"/><path d="M40 2 L32 5 L26 10 L26 13 H40Z" fill="#101218"/>
<path d="M-4 13 C10 12 20 13 40 13 V19 H-4Z" fill="#5e6888"/><circle cx="12" cy="16" r="3" fill="#8e98b8"/><circle cx="24" cy="15" r="2" fill="#7e88a8"/><path d="M-4 19 H40 V36 H-4Z" fill="#1a1e2c"/><circle cx="8" cy="23" r="2.5" fill="#3e4460"/><circle cx="20" cy="25" r="2" fill="#464c68"/><circle cx="30" cy="22" r="2.5" fill="#363c54"/></g></svg>
<div class="t" style="left:628px;top:284px;width:80px;text-align:center;line-height:14px">rocks.jpg</div>
<svg style="left:725px;top:248px;overflow:hidden" width="36" height="32" viewBox="0 0 36 32"><defs><filter id="sf9" x="-20%" y="-20%" width="140%" height="140%"><feGaussianBlur stdDeviation="0.6"/></filter></defs><g filter="url(#sf9)"><defs><linearGradient id="tb9" x1="0" y1="0" x2="1" y2="0"><stop offset="0" stop-color="#1e7c9c"/><stop offset="0.4" stop-color="#28a0b4"/><stop offset="0.5" stop-color="#d8ecec"/><stop offset="0.62" stop-color="#e8e4d8"/><stop offset="0.7" stop-color="#d0a878"/><stop offset="1" stop-color="#dab684"/></linearGradient></defs><rect x="-4" y="-4" width="44" height="40" fill="url(#tb9)"/></g></svg>
<div class="t" style="left:703px;top:284px;width:80px;text-align:center;line-height:14px">sea.jpg</div>
<svg style="left:800px;top:248px;overflow:hidden" width="36" height="32" viewBox="0 0 36 32"><defs><filter id="sf10" x="-20%" y="-20%" width="140%" height="140%"><feGaussianBlur stdDeviation="0.6"/></filter></defs><g filter="url(#sf10)"><rect x="-4" y="-4" width="44" height="40" fill="#22b4c8"/><circle cx="5" cy="5" r="6" fill="#5ad0d8"/><circle cx="31" cy="27" r="6" fill="#138aa8"/><circle cx="32" cy="5" r="5" fill="#60d4dc"/><circle cx="4" cy="26" r="5" fill="#18a0b8"/>
<ellipse cx="16" cy="18" rx="6.5" ry="8.5" transform="rotate(30 16 18)" fill="#6a3018"/><ellipse cx="16" cy="18" rx="4.5" ry="6.5" transform="rotate(30 16 18)" fill="#8e4a26"/><circle cx="22.5" cy="8.5" r="2" fill="#7a4020"/><path d="M21 13 L31 16 M10 24 L6 29 M13 10 L10 3 M19 25 L21 31" stroke="#6a3018" stroke-width="1.4"/></g></svg>
<div class="t" style="left:778px;top:284px;width:80px;text-align:center;line-height:14px">sea2.jpg</div>
<svg style="left:875px;top:248px;overflow:hidden" width="36" height="32" viewBox="0 0 36 32"><defs><filter id="sf11" x="-20%" y="-20%" width="140%" height="140%"><feGaussianBlur stdDeviation="0.6"/></filter></defs><g filter="url(#sf11)"><defs><linearGradient id="tb11" x1="0" y1="0" x2="0" y2="1"><stop offset="0" stop-color="#1640a0"/><stop offset="0.6" stop-color="#3c78d0"/><stop offset="1" stop-color="#2a68b8"/></linearGradient></defs>
<rect x="-4" y="-4" width="44" height="40" fill="url(#tb11)"/><circle cx="21" cy="10" r="4" fill="#f4f8fc"/><circle cx="18" cy="15" r="4.5" fill="#eef4fa"/><circle cx="25" cy="16" r="4.5" fill="#f0f5fa"/><path d="M4 22 C8 18 14 19 18 17 L28 17 C32 19 36 19 38 22Z" fill="#e8f0f8"/><rect x="-4" y="22" width="44" height="3" fill="#c8daf0"/><rect x="-4" y="25" width="44" height="11" fill="#5a88c0"/><rect x="-4" y="27" width="44" height="1.5" fill="#a8c4e4"/></g></svg>
<div class="t" style="left:853px;top:284px;width:80px;text-align:center;line-height:14px">sea3.jpg</div>
<svg style="left:950px;top:248px;overflow:hidden" width="36" height="32" viewBox="0 0 36 32"><defs><filter id="sf12" x="-20%" y="-20%" width="140%" height="140%"><feGaussianBlur stdDeviation="0.6"/></filter></defs><g filter="url(#sf12)"><defs><linearGradient id="tb12" x1="0" y1="0" x2="0.3" y2="1"><stop offset="0" stop-color="#200a40"/><stop offset="0.35" stop-color="#6a2a98"/><stop offset="0.55" stop-color="#4a2050"/><stop offset="0.75" stop-color="#8a4a20"/><stop offset="1" stop-color="#2a1608"/></linearGradient><radialGradient id="tb12r"><stop offset="0" stop-color="#fff0e8"/><stop offset="1" stop-color="#e090d0" stop-opacity="0"/></radialGradient></defs>
<rect x="-4" y="-4" width="44" height="40" fill="url(#tb12)"/><path d="M18 -4 H40 V14 C32 10 24 6 18 -4Z" fill="#0a0828" opacity="0.8"/><circle cx="17" cy="19" r="6" fill="url(#tb12r)"/><path d="M8 36 L16 22 L22 22 L30 36Z" fill="#1a0e06"/></g></svg>
<div class="t" style="left:928px;top:284px;width:80px;text-align:center;line-height:14px">sky.jpg</div>
<svg style="left:1025px;top:248px;overflow:hidden" width="36" height="32" viewBox="0 0 36 32"><defs><filter id="sf13" x="-20%" y="-20%" width="140%" height="140%"><feGaussianBlur stdDeviation="0.6"/></filter></defs><g filter="url(#sf13)"><defs><linearGradient id="tb13" x1="0" y1="0" x2="0" y2="1"><stop offset="0" stop-color="#5a1a48"/><stop offset="0.35" stop-color="#c03a68"/><stop offset="0.62" stop-color="#d04a70"/><stop offset="0.66" stop-color="#3a1a48"/><stop offset="1" stop-color="#2a1030"/></linearGradient></defs>
<rect x="-4" y="-4" width="44" height="40" fill="url(#tb13)"/><ellipse cx="18" cy="16" rx="7" ry="4" fill="#2a0a18"/><rect x="17" y="17" width="2" height="8" fill="#ffb060"/><path d="M-4 36 C8 26 14 25 18 25 C22 25 28 26 40 36Z" fill="#1a0810"/></g></svg>
<div class="t" style="left:1003px;top:284px;width:80px;text-align:center;line-height:14px">tree.jpg</div>
<svg style="left:1100px;top:248px;overflow:hidden" width="36" height="32" viewBox="0 0 36 32"><defs><filter id="sf14" x="-20%" y="-20%" width="140%" height="140%"><feGaussianBlur stdDeviation="0.6"/></filter></defs><g filter="url(#sf14)"><defs><linearGradient id="tb14" x1="0" y1="0" x2="0" y2="1"><stop offset="0" stop-color="#a8dce8"/><stop offset="0.3" stop-color="#70aec0"/><stop offset="0.5" stop-color="#2a5060"/><stop offset="0.75" stop-color="#5a8c9c"/><stop offset="1" stop-color="#1c3440"/></linearGradient></defs>
<rect x="-4" y="-4" width="44" height="40" fill="url(#tb14)"/><circle cx="8" cy="5" r="4" fill="#c8ecf4" opacity="0.8"/><circle cx="28" cy="8" r="4" fill="#4a8090" opacity="0.7"/><path d="M-4 17 C8 15 20 19 40 16" stroke="#142a34" stroke-width="2.5" fill="none"/><path d="M-4 24 C10 21 22 26 40 23" stroke="#90c4d4" stroke-width="1.5" fill="none"/><circle cx="24" cy="28" r="3" fill="#2a4a58"/></g></svg>
<div class="t" style="left:1078px;top:284px;width:80px;text-align:center;line-height:14px">water.jpg</div></div></div>
<!-- misc -->
<!-- title icon -->
<svg style="left:8px;top:8px" width="18" height="15" viewBox="0 0 18 15">
<path d="M1 1H7.5L9 2.5H16V6.5H17.5L15.8 13.5H1Z" fill="#5e9a14"/>
<circle cx="8.5" cy="7.6" r="4.3" fill="#fff"/>
<path d="M7.5 3.3V8.2Q7.5 9.4 5.9 9.4M9.5 11.9V7Q9.5 5.8 11.1 5.8" fill="none" stroke="#5e9a14" stroke-width="1.3"/>
</svg>
<!-- lock -->
<svg style="left:23px;top:94px" width="13" height="12" viewBox="0 0 13 12"><path d="M3.5 5V4A3 2.6 0 0 1 9.5 4V5" fill="none" stroke="#e6be8a" stroke-width="1.6"/><rect x="1.5" y="5" width="10" height="6" rx="0.5" fill="#e6be8a"/></svg>
<!-- address dropdown -->
<svg style="left:993px;top:97px" width="7" height="5"><path d="M0 0H7L3.5 4Z" fill="#000"/></svg>
<!-- tab dots and close -->
<svg style="left:11.5px;top:126.5px" width="9" height="9"><circle cx="4.5" cy="4.5" r="3.8" fill="#d4d4d4"/></svg>
<svg style="left:88px;top:127px" width="6" height="6" viewBox="0 0 6 6"><path d="M0.5 0.5L5.5 5.5M5.5 0.5L0.5 5.5" stroke="#fff" stroke-width="0.9"/></svg>
<svg style="left:114.5px;top:126.5px" width="9" height="9"><circle cx="4.5" cy="4.5" r="3.8" fill="#d4d4d4"/></svg>
<svg style="left:641px;top:126.5px" width="9" height="9"><circle cx="4.5" cy="4.5" r="3.8" fill="#10b010"/></svg>
<svg style="left:793px;top:127px" width="6" height="6" viewBox="0 0 6 6"><path d="M0.5 0.5L5.5 5.5M5.5 0.5L0.5 5.5" stroke="#f0f0f0" stroke-width="0.9"/></svg>
<svg style="left:819px;top:126.5px" width="9" height="9"><circle cx="4.5" cy="4.5" r="3.8" fill="#10b010"/></svg>
<!-- tab scroll arrows -->
<svg style="left:589px;top:123px" width="30" height="12"><path d="M6 0.5V10.5L1 5.5Z" fill="#c4c4c4"/><path d="M22 0.5V10.5L27 5.5Z" fill="#c4c4c4"/></svg>
<!-- left path bar icons -->
<svg style="left:0;top:145px" width="630" height="26" viewBox="0 145 630 26">
<path d="M7.5 157L13.5 151V155H22V159H13.5V163Z" fill="#5b9bd5"/>
<path d="M29 156H34L31.5 159Z" fill="#000"/>
<path d="M60 157L54 151V155H45V159H54V163Z" fill="#9a9a9a"/>
<path d="M66 156H71L68.5 159Z" fill="#9a9a9a"/>
<path d="M526.5 156.5L530 160L533.5 156.5" fill="none" stroke="#222" stroke-width="1.1"/>
<path d="M553 150L555 155H560L556 158L557.5 163L553 160L548.5 163L550 158L546 155H551Z" fill="#9a9a9a"/>
<path d="M567 156H572L569.5 159Z" fill="#9a9a9a"/>
<path d="M582 151H588L589.5 153H596V163H582Z" fill="#dca46a"/><path d="M589 157L585.5 160.5M589 157L592.5 160.5M589 158V163" stroke="#fff" stroke-width="1.6" fill="none"/>
<path d="M617.5 154 A6 6 0 1 0 618.5 160" fill="none" stroke="#5ea0e0" stroke-width="1.3"/><path d="M614.5 155H621L617.8 159Z" fill="#5ea0e0"/>
</svg>
<svg style="left:80px;top:151px" width="16" height="15" viewBox="0 0 16 15"><rect x="0.5" y="0.5" width="15" height="10" fill="url(#scrg)" stroke="#2a84c8"/><rect x="6" y="11.5" width="4" height="1" fill="#6f8ea8"/><rect x="0" y="13.5" width="16" height="1.2" fill="#8aaac4"/></svg>
<!-- right path bar icons -->
<svg style="left:630px;top:145px" width="80" height="26" viewBox="630 145 80 26">
<path d="M637.5 157L643.5 151V155H652V159H643.5V163Z" fill="#5b9bd5"/>
<path d="M658 156H663L660.5 159Z" fill="#000"/>
<path d="M690 157L684 151V155H675V159H684V163Z" fill="#9a9a9a"/>
<path d="M695 156H700L697.5 159Z" fill="#9a9a9a"/>
</svg>
<svg style="left:711px;top:149px" width="13" height="18" viewBox="0 0 13 18"><path d="M0.5 0.5H9L12.5 3V17.5H0.5Z" fill="#f7d774" stroke="#e0b640"/></svg>
<!-- tree scrollbar arrows -->
<svg style="left:213px;top:171px" width="16" height="309" viewBox="0 0 16 309"><path d="M4.5 11.5L8 8L11.5 11.5" fill="none" stroke="#606060" stroke-width="1.6"/><path d="M4.5 298L8 301.5L11.5 298" fill="none" stroke="#606060" stroke-width="1.6"/></svg>

<!-- transfers -->
<div class="a" style="left:1px;top:484px;width:1179px;height:1px;background:#c6c6c6"></div>
<div class="a" style="left:1px;top:485px;width:1179px;height:26px;background:#efefef;border-bottom:1px solid #b4b4b4"></div>
<div class="a" style="left:1px;top:485px;width:64px;height:25px;background:#999"></div>
<div class="t" style="left:7px;top:491px;color:#fff;font-weight:bold">Transfers</div>
<div class="t" style="left:72px;top:491px">Logs</div>
<div class="a" style="left:1px;top:511px;width:1179px;height:24px;background:#e5e5e5;border-bottom:1px solid #d3dbe4"></div>
<div class="a" style="left:1px;top:535px;width:1179px;height:135px;background:#f8f8f8"></div>
<div class="t" style="left:6px;top:516px">Name</div>
<div class="t" style="left:206px;top:516px">Status</div>
<div class="t" style="left:371px;top:516px">Size</div>
<div class="t" style="left:521px;top:516px">Local Path</div>
<div class="t" style="left:671px;top:516px">&lt;-&gt;</div>
<div class="t" style="left:706px;top:516px">Remote Path</div>
<div class="t" style="left:871px;top:516px">Speed</div>
<div class="t" style="left:951px;top:516px">Estimate...</div>
<div class="t" style="left:1021px;top:516px">Elapsed T...</div>
<div class="t" style="left:265px;top:516px;width:100px;text-align:center">Progress</div>
<div class="a" style="left:200px;top:511px;width:1px;height:23px;background:#d5dbe3"></div>
<div class="a" style="left:265px;top:511px;width:1px;height:23px;background:#d5dbe3"></div>
<div class="a" style="left:365px;top:511px;width:1px;height:23px;background:#d5dbe3"></div>
<div class="a" style="left:515px;top:511px;width:1px;height:23px;background:#d5dbe3"></div>
<div class="a" style="left:661px;top:511px;width:1px;height:23px;background:#d5dbe3"></div>
<div class="a" style="left:700px;top:511px;width:1px;height:23px;background:#d5dbe3"></div>
<div class="a" style="left:865px;top:511px;width:1px;height:23px;background:#d5dbe3"></div>
<div class="a" style="left:945px;top:511px;width:1px;height:23px;background:#d5dbe3"></div>
<div class="a" style="left:1015px;top:511px;width:1px;height:23px;background:#d5dbe3"></div>
<div class="a" style="left:1085px;top:511px;width:1px;height:23px;background:#d5dbe3"></div>
<svg style="left:19px;top:537px" width="12" height="15" viewBox="0 0 12 15"><path d="M0.5 0.5H8L11.5 4V14.5H0.5Z" fill="#fff" stroke="#8a8a8a"/><path d="M8 0.5V4H11.5" fill="none" stroke="#8a8a8a"/><rect x="3" y="6" width="6" height="6" fill="#1a73c9"/><path d="M3 12L6 8.5L9 12Z" fill="#0b3f8a"/></svg>
<div class="t" style="left:39px;top:538px;font-size:12px">balloon.jpg</div>
<div class="t" style="left:207px;top:538px">Finished</div>
<div class="a" style="left:266px;top:537px;width:100px;height:16px;background:#5ebf14"></div>
<div class="t" style="left:266px;top:538px;width:100px;text-align:center">100%</div>
<div class="t" style="left:371px;top:538px">28KB/28KB</div>
<div class="t" style="left:522px;top:538px;font-size:12px">C:\Users\test\Desktop\P..</div>
<svg style="left:676px;top:539px" width="11" height="12" viewBox="0 0 11 12"><path d="M3.5 0H7.5V6H11L5.5 12L0 6H3.5Z" fill="#1e88e5"/></svg>
<div class="t" style="left:707px;top:538px;font-size:12px">mysvr2.netsarang.com:/ho...</div>
<div class="t" style="left:872px;top:538px">908.56 KB/s</div>
<svg style="left:19px;top:556px" width="12" height="15" viewBox="0 0 12 15"><path d="M0.5 0.5H8L11.5 4V14.5H0.5Z" fill="#fff" stroke="#8a8a8a"/><path d="M8 0.5V4H11.5" fill="none" stroke="#8a8a8a"/><rect x="3" y="6" width="6" height="6" fill="#1a73c9"/><path d="M3 12L6 8.5L9 12Z" fill="#0b3f8a"/></svg>
<div class="t" style="left:39px;top:557px;font-size:12px">bridge.jpg</div>
<div class="t" style="left:207px;top:557px">Finished</div>
<div class="a" style="left:266px;top:556px;width:100px;height:16px;background:#5ebf14"></div>
<div class="t" style="left:266px;top:557px;width:100px;text-align:center">100%</div>
<div class="t" style="left:371px;top:557px">48KB/48KB</div>
<div class="t" style="left:522px;top:557px;font-size:12px">C:\Users\test\Desktop\P..</div>
<svg style="left:676px;top:558px" width="11" height="12" viewBox="0 0 11 12"><path d="M3.5 0H7.5V6H11L5.5 12L0 6H3.5Z" fill="#1e88e5"/></svg>
<div class="t" style="left:707px;top:557px;font-size:12px">mysvr2.netsarang.com:/ho...</div>
<div class="t" style="left:872px;top:557px">3.23 MB/s</div>
<svg style="left:19px;top:575px" width="12" height="15" viewBox="0 0 12 15"><path d="M0.5 0.5H8L11.5 4V14.5H0.5Z" fill="#fff" stroke="#8a8a8a"/><path d="M8 0.5V4H11.5" fill="none" stroke="#8a8a8a"/><rect x="3" y="6" width="6" height="6" fill="#1a73c9"/><path d="M3 12L6 8.5L9 12Z" fill="#0b3f8a"/></svg>
<div class="t" style="left:39px;top:576px;font-size:12px">clouds.jpg</div>
<div class="t" style="left:207px;top:576px">Finished</div>
<div class="a" style="left:266px;top:575px;width:100px;height:16px;background:#5ebf14"></div>
<div class="t" style="left:266px;top:576px;width:100px;text-align:center">100%</div>
<div class="t" style="left:371px;top:576px">44KB/44KB</div>
<div class="t" style="left:522px;top:576px;font-size:12px">C:\Users\test\Desktop\P..</div>
<svg style="left:676px;top:577px" width="11" height="12" viewBox="0 0 11 12"><path d="M3.5 0H7.5V6H11L5.5 12L0 6H3.5Z" fill="#1e88e5"/></svg>
<div class="t" style="left:707px;top:576px;font-size:12px">mysvr2.netsarang.com:/ho...</div>
<div class="t" style="left:872px;top:576px">2.92 MB/s</div>
<svg style="left:19px;top:594px" width="12" height="15" viewBox="0 0 12 15"><path d="M0.5 0.5H8L11.5 4V14.5H0.5Z" fill="#fff" stroke="#8a8a8a"/><path d="M8 0.5V4H11.5" fill="none" stroke="#8a8a8a"/><rect x="3" y="6" width="6" height="6" fill="#1a73c9"/><path d="M3 12L6 8.5L9 12Z" fill="#0b3f8a"/></svg>
<div class="t" style="left:39px;top:595px;font-size:12px">galaxy.jpg</div>
<div class="t" style="left:207px;top:595px">Finished</div>
<div class="a" style="left:266px;top:594px;width:100px;height:16px;background:#5ebf14"></div>
<div class="t" style="left:266px;top:595px;width:100px;text-align:center">100%</div>
<div class="t" style="left:371px;top:595px">114KB/114KB</div>
<div class="t" style="left:522px;top:595px;font-size:12px">C:\Users\test\Desktop\P..</div>
<svg style="left:676px;top:596px" width="11" height="12" viewBox="0 0 11 12"><path d="M3.5 0H7.5V6H11L5.5 12L0 6H3.5Z" fill="#1e88e5"/></svg>
<div class="t" style="left:707px;top:595px;font-size:12px">mysvr2.netsarang.com:/ho...</div>
<div class="t" style="left:872px;top:595px">3.69 MB/s</div>
<svg style="left:19px;top:613px" width="12" height="15" viewBox="0 0 12 15"><path d="M0.5 0.5H8L11.5 4V14.5H0.5Z" fill="#fff" stroke="#8a8a8a"/><path d="M8 0.5V4H11.5" fill="none" stroke="#8a8a8a"/><rect x="3" y="6" width="6" height="6" fill="#1a73c9"/><path d="M3 12L6 8.5L9 12Z" fill="#0b3f8a"/></svg>
<div class="t" style="left:39px;top:614px;font-size:12px">homberg.jpg</div>
<div class="t" style="left:207px;top:614px">Finished</div>
<div class="a" style="left:266px;top:613px;width:100px;height:16px;background:#5ebf14"></div>
<div class="t" style="left:266px;top:614px;width:100px;text-align:center">100%</div>
<div class="t" style="left:371px;top:614px">40KB/40KB</div>
<div class="t" style="left:522px;top:614px;font-size:12px">C:\Users\test\Desktop\P..</div>
<svg style="left:676px;top:615px" width="11" height="12" viewBox="0 0 11 12"><path d="M3.5 0H7.5V6H11L5.5 12L0 6H3.5Z" fill="#1e88e5"/></svg>
<div class="t" style="left:707px;top:614px;font-size:12px">mysvr2.netsarang.com:/ho...</div>
<div class="t" style="left:872px;top:614px">2.48 MB/s</div>
<svg style="left:19px;top:632px" width="12" height="15" viewBox="0 0 12 15"><path d="M0.5 0.5H8L11.5 4V14.5H0.5Z" fill="#fff" stroke="#8a8a8a"/><path d="M8 0.5V4H11.5" fill="none" stroke="#8a8a8a"/><rect x="3" y="6" width="6" height="6" fill="#1a73c9"/><path d="M3 12L6 8.5L9 12Z" fill="#0b3f8a"/></svg>
<div class="t" style="left:39px;top:633px;font-size:12px">lake.jpg</div>
<div class="t" style="left:207px;top:633px">Finished</div>
<div class="a" style="left:266px;top:632px;width:100px;height:16px;background:#5ebf14"></div>
<div class="t" style="left:266px;top:633px;width:100px;text-align:center">100%</div>
<div class="t" style="left:371px;top:633px">77KB/77KB</div>
<div class="t" style="left:522px;top:633px;font-size:12px">C:\Users\test\Desktop\P..</div>
<svg style="left:676px;top:634px" width="11" height="12" viewBox="0 0 11 12"><path d="M3.5 0H7.5V6H11L5.5 12L0 6H3.5Z" fill="#1e88e5"/></svg>
<div class="t" style="left:707px;top:633px;font-size:12px">mysvr2.netsarang.com:/ho...</div>
<div class="t" style="left:872px;top:633px">843.57 KB/s</div>
<svg style="left:19px;top:651px" width="12" height="15" viewBox="0 0 12 15"><path d="M0.5 0.5H8L11.5 4V14.5H0.5Z" fill="#fff" stroke="#8a8a8a"/><path d="M8 0.5V4H11.5" fill="none" stroke="#8a8a8a"/><rect x="3" y="6" width="6" height="6" fill="#1a73c9"/><path d="M3 12L6 8.5L9 12Z" fill="#0b3f8a"/></svg>
<div class="t" style="left:39px;top:652px;font-size:12px">malibu.jpg</div>
<div class="t" style="left:207px;top:652px">Finished</div>
<div class="a" style="left:266px;top:651px;width:100px;height:16px;background:#5ebf14"></div>
<div class="t" style="left:266px;top:652px;width:100px;text-align:center">100%</div>
<div class="t" style="left:371px;top:652px">71KB/71KB</div>
<div class="t" style="left:522px;top:652px;font-size:12px">C:\Users\test\Desktop\P..</div>
<svg style="left:676px;top:653px" width="11" height="12" viewBox="0 0 11 12"><path d="M3.5 0H7.5V6H11L5.5 12L0 6H3.5Z" fill="#1e88e5"/></svg>
<div class="t" style="left:707px;top:652px;font-size:12px">mysvr2.netsarang.com:/ho...</div>
<div class="t" style="left:872px;top:652px">4.45 MB/s</div>
</body></html>
